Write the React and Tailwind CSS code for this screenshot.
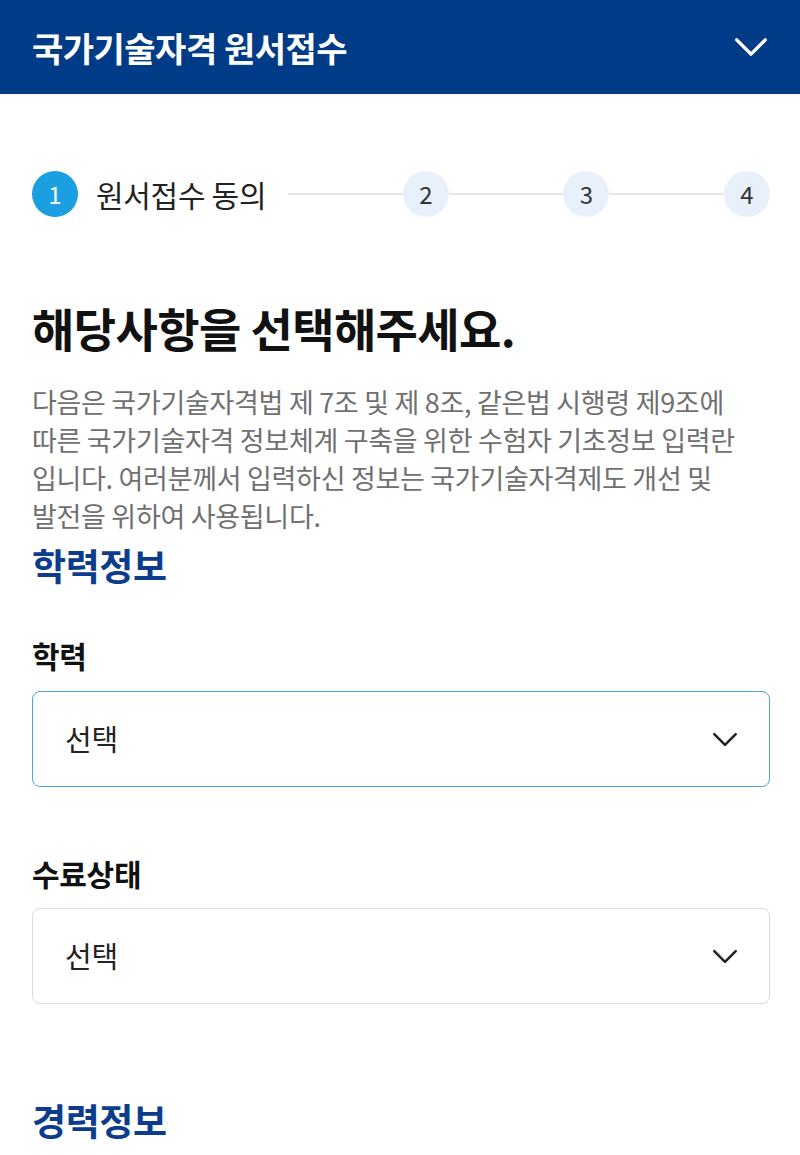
import React from "react";

const font = { fontFamily: '"Noto Sans CJK KR", "Noto Sans", sans-serif' };

function Chevron({ className, strokeWidth = 2 }) {
  return (
    <svg viewBox="0 0 24 14" className={className} fill="none" stroke="currentColor" strokeWidth={strokeWidth} strokeLinecap="round" strokeLinejoin="round">
      <path d="M2 2 L12 12 L22 2" />
    </svg>
  );
}

function Select({ active }) {
  return (
    <div className={`flex h-[96px] items-center justify-between rounded-[8px] border bg-white pl-[32px] pr-[31px] ${active ? "border-[#4aa8d4]" : "border-[#dcdcdc]"}`}>
      <span className="text-[29px] tracking-[-0.3px] text-[#222]">선택</span>
      <Chevron className="h-[15px] w-[26px] text-[#222]" strokeWidth={2.4} />
    </div>
  );
}

export default function App() {
  return (
    <div className="min-h-[1155px] w-[800px] bg-white" style={font}>
      <header className="flex h-[94px] items-center justify-between bg-[#003b87] pl-[32px] pr-[30px]">
        <h1 className="text-[34px] font-bold tracking-[-0.5px] text-white">국가기술자격 원서접수</h1>
        <Chevron className="h-[20px] w-[38px] text-white" strokeWidth={2.4} />
      </header>

      <div className="pl-[32px] pr-[30px]">
        <div className="mt-[77px] flex items-center">
          <div className="flex h-[46px] w-[46px] shrink-0 items-center justify-center rounded-full bg-[#1aa0e0] text-[24px] text-white">1</div>
          <span className="ml-[18px] text-[30px] tracking-[-0.3px] text-[#222]">원서접수 동의</span>
          <div className="ml-[22px] h-[2px] flex-1 bg-[#e6e6e6]" />
          <div className="flex h-[46px] w-[46px] shrink-0 items-center justify-center rounded-full bg-[#e8f1fb] text-[24px] text-[#333]">2</div>
          <div className="h-[2px] flex-1 bg-[#e6e6e6]" />
          <div className="flex h-[46px] w-[46px] shrink-0 items-center justify-center rounded-full bg-[#e8f1fb] text-[24px] text-[#333]">3</div>
          <div className="h-[2px] flex-1 bg-[#e6e6e6]" />
          <div className="flex h-[46px] w-[46px] shrink-0 items-center justify-center rounded-full bg-[#e8f1fb] text-[24px] text-[#333]">4</div>
        </div>

        <h2 className="mt-[84px] text-[46px] font-bold leading-[52px] tracking-[-0.6px] text-[#111]">해당사항을 선택해주세요.</h2>

        <p className="mt-[30px] text-[27px] leading-[38px] tracking-[-0.3px] text-[#707070]">
          다음은 국가기술자격법 제 7조 및 제 8조, 같은법 시행령 제9조에<br />
          따른 국가기술자격 정보체계 구축을 위한 수험자 기초정보 입력란<br />
          입니다. 여러분께서 입력하신 정보는 국가기술자격제도 개선 및<br />
          발전을 위하여 사용됩니다.
        </p>

        <h3 className="mt-[6px] text-[37px] font-bold leading-[48px] tracking-[-0.4px] text-[#0b3d8c]">학력정보</h3>

        <div className="mt-[48px] text-[30px] font-bold leading-[36px] tracking-[-0.3px] text-[#111]">학력</div>
        <div className="mt-[18px]">
          <Select active />
        </div>

        <div className="mt-[68px] text-[30px] font-bold leading-[36px] tracking-[-0.3px] text-[#111]">수료상태</div>
        <div className="mt-[17px]">
          <Select />
        </div>

        <h3 className="mt-[92px] text-[37px] font-bold leading-[48px] tracking-[-0.4px] text-[#0b3d8c]">경력정보</h3>
      </div>
    </div>
  );
}
